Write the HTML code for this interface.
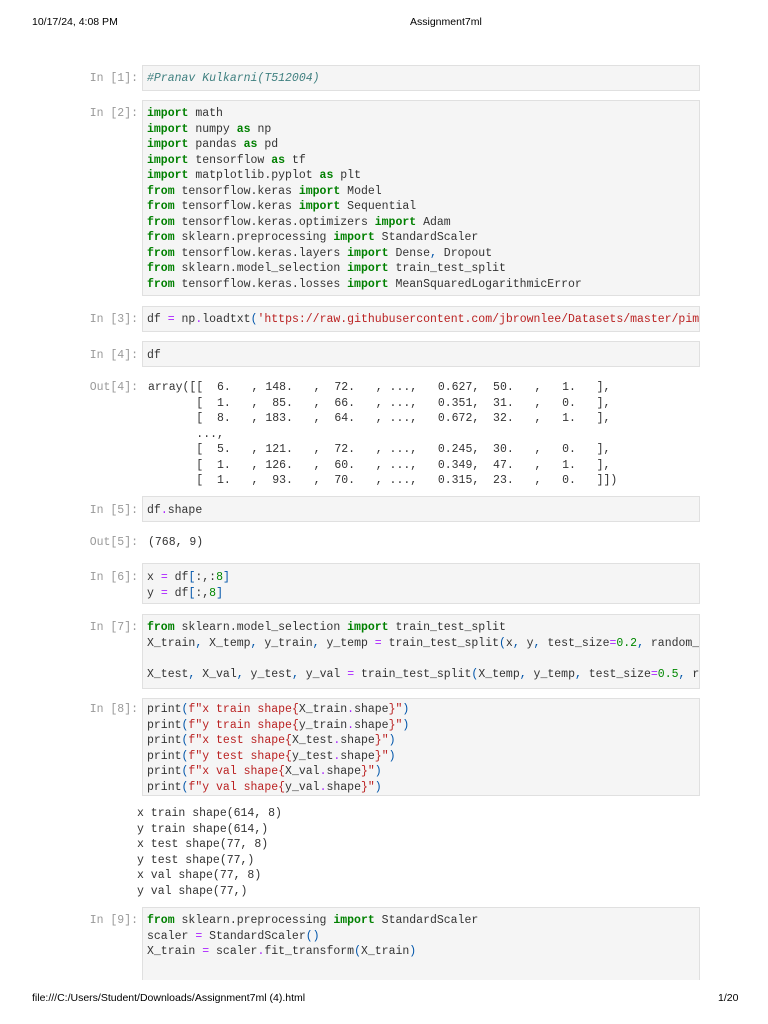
<!DOCTYPE html>
<html><head><meta charset="utf-8"><style>
body{margin:0;width:768px;height:1024px;background:#fff;position:relative;overflow:hidden;font-family:"Liberation Sans",sans-serif}
.hd{position:absolute;font-size:10.5px;color:#000}
.box{position:absolute;left:142px;width:558px;background:#f5f5f5;border:1px solid #e0e0e0;box-sizing:border-box;overflow:hidden}
pre{margin:0;position:absolute;font-family:"Liberation Mono",monospace;font-size:11.5px;line-height:15.55px;color:#333;white-space:pre}
.p{position:absolute;right:630px;font-family:"Liberation Mono",monospace;font-size:11.5px;line-height:15.55px;color:#999;white-space:pre}
.k{color:#008000;font-weight:bold}.s{color:#ba2121}.o{color:#aa22ff}.n{color:#008800}.b{color:#0055aa}.c{color:#408080;font-style:italic}
</style></head><body>
<div class="hd" style="left:32px;top:16px">10/17/24, 4:08 PM</div>
<div class="hd" style="left:410px;top:16px">Assignment7ml</div>

<div class="box" style="top:65px;height:26px"></div>
<div class="p" style="top:71px">In [1]:</div>
<pre style="left:147px;top:71px"><span class="c">#Pranav Kulkarni(T512004)</span></pre>

<div class="box" style="top:100px;height:196px"></div>
<div class="p" style="top:106px">In [2]:</div>
<pre style="left:147px;top:106px"><span class="k">import</span> math
<span class="k">import</span> numpy <span class="k">as</span> np
<span class="k">import</span> pandas <span class="k">as</span> pd
<span class="k">import</span> tensorflow <span class="k">as</span> tf
<span class="k">import</span> matplotlib.pyplot <span class="k">as</span> plt
<span class="k">from</span> tensorflow.keras <span class="k">import</span> Model
<span class="k">from</span> tensorflow.keras <span class="k">import</span> Sequential
<span class="k">from</span> tensorflow.keras.optimizers <span class="k">import</span> Adam
<span class="k">from</span> sklearn.preprocessing <span class="k">import</span> StandardScaler
<span class="k">from</span> tensorflow.keras.layers <span class="k">import</span> Dense<span class="b">,</span> Dropout
<span class="k">from</span> sklearn.model_selection <span class="k">import</span> train_test_split
<span class="k">from</span> tensorflow.keras.losses <span class="k">import</span> MeanSquaredLogarithmicError</pre>

<div class="box" style="top:306px;height:26px"></div>
<div class="p" style="top:312px">In [3]:</div>
<pre style="left:147px;top:312px;width:552px;overflow:hidden">df <span class="o">=</span> np<span class="o">.</span>loadtxt<span class="b">(</span><span class="s">'https://raw.githubusercontent.com/jbrownlee/Datasets/master/pima</span></pre>

<div class="box" style="top:341px;height:26px"></div>
<div class="p" style="top:348px">In [4]:</div>
<pre style="left:147px;top:348px">df</pre>

<div class="p" style="top:380px">Out[4]:</div>
<pre style="left:148px;top:380px">array([[  6.   , 148.   ,  72.   , ...,   0.627,  50.   ,   1.   ],
       [  1.   ,  85.   ,  66.   , ...,   0.351,  31.   ,   0.   ],
       [  8.   , 183.   ,  64.   , ...,   0.672,  32.   ,   1.   ],
       ...,
       [  5.   , 121.   ,  72.   , ...,   0.245,  30.   ,   0.   ],
       [  1.   , 126.   ,  60.   , ...,   0.349,  47.   ,   1.   ],
       [  1.   ,  93.   ,  70.   , ...,   0.315,  23.   ,   0.   ]])</pre>

<div class="box" style="top:496px;height:26px"></div>
<div class="p" style="top:503px">In [5]:</div>
<pre style="left:147px;top:503px">df<span class="o">.</span>shape</pre>
<div class="p" style="top:535px">Out[5]:</div>
<pre style="left:148px;top:535px">(768, 9)</pre>

<div class="box" style="top:563px;height:41px"></div>
<div class="p" style="top:570px">In [6]:</div>
<pre style="left:147px;top:570px">x <span class="o">=</span> df<span class="b">[</span>:,:<span class="n">8</span><span class="b">]</span>
y <span class="o">=</span> df<span class="b">[</span>:,<span class="n">8</span><span class="b">]</span></pre>

<div class="box" style="top:614px;height:75px"></div>
<div class="p" style="top:620px">In [7]:</div>
<pre style="left:147px;top:620px;width:552px;overflow:hidden"><span class="k">from</span> sklearn.model_selection <span class="k">import</span> train_test_split
X_train<span class="b">,</span> X_temp<span class="b">,</span> y_train<span class="b">,</span> y_temp <span class="o">=</span> train_test_split<span class="b">(</span>x<span class="b">,</span> y<span class="b">,</span> test_size<span class="o">=</span><span class="n">0.2</span><span class="b">,</span> random_state

X_test<span class="b">,</span> X_val<span class="b">,</span> y_test<span class="b">,</span> y_val <span class="o">=</span> train_test_split<span class="b">(</span>X_temp<span class="b">,</span> y_temp<span class="b">,</span> test_size<span class="o">=</span><span class="n">0.5</span><span class="b">,</span> random</pre>

<div class="box" style="top:698px;height:98px"></div>
<div class="p" style="top:702px">In [8]:</div>
<pre style="left:147px;top:702px">print<span class="b">(</span><span class="s">f"x train shape{</span>X_train<span class="o">.</span>shape<span class="s">}"</span><span class="b">)</span>
print<span class="b">(</span><span class="s">f"y train shape{</span>y_train<span class="o">.</span>shape<span class="s">}"</span><span class="b">)</span>
print<span class="b">(</span><span class="s">f"x test shape{</span>X_test<span class="o">.</span>shape<span class="s">}"</span><span class="b">)</span>
print<span class="b">(</span><span class="s">f"y test shape{</span>y_test<span class="o">.</span>shape<span class="s">}"</span><span class="b">)</span>
print<span class="b">(</span><span class="s">f"x val shape{</span>X_val<span class="o">.</span>shape<span class="s">}"</span><span class="b">)</span>
print<span class="b">(</span><span class="s">f"y val shape{</span>y_val<span class="o">.</span>shape<span class="s">}"</span><span class="b">)</span></pre>

<pre style="left:137px;top:806px">x train shape(614, 8)
y train shape(614,)
x test shape(77, 8)
y test shape(77,)
x val shape(77, 8)
y val shape(77,)</pre>

<div class="box" style="top:907px;height:80px;border-bottom:none"></div>
<div class="p" style="top:913px">In [9]:</div>
<pre style="left:147px;top:913px"><span class="k">from</span> sklearn.preprocessing <span class="k">import</span> StandardScaler
scaler <span class="o">=</span> StandardScaler<span class="b">()</span>
X_train <span class="o">=</span> scaler<span class="o">.</span>fit_transform<span class="b">(</span>X_train<span class="b">)</span></pre>
<div style="position:absolute;left:0;top:980px;width:768px;height:44px;background:#fff"></div>
<div class="hd" style="left:32px;top:992px">file:///C:/Users/Student/Downloads/Assignment7ml (4).html</div>
<div class="hd" style="left:718px;top:992px">1/20</div>
</body></html>
